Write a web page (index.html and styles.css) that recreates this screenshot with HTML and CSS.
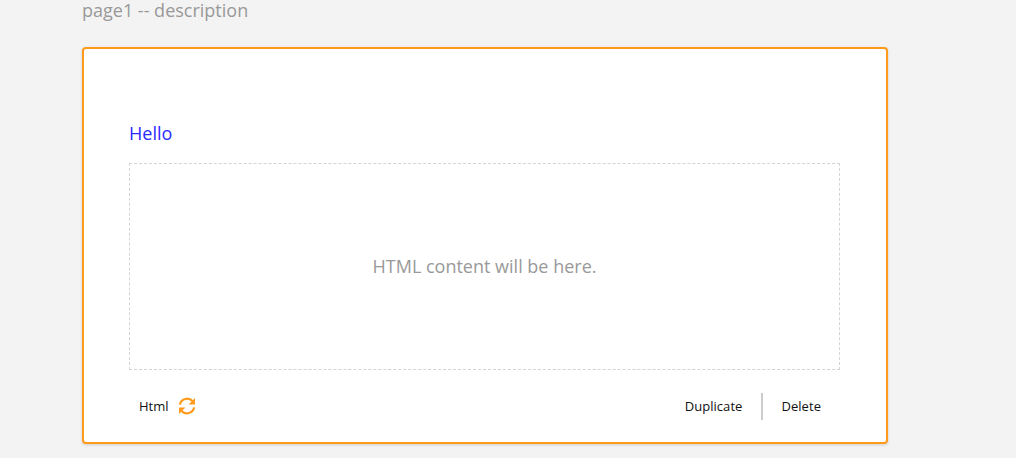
FILE: index.html
```html
<!DOCTYPE html>
<html lang="en">
<head>
<meta charset="utf-8">
<title>page1</title>
<link rel="stylesheet" href="styles.css">
</head>
<body>
<main class="page">
  <p class="description">page1 -- description</p>
  <section class="card">
    <h2 class="title">Hello</h2>
    <div class="placeholder"><span class="placeholder-text">HTML content will be here.</span></div>
    <footer class="toolbar">
      <div class="type">
        <span class="label">Html</span>
        <svg class="refresh" width="18" height="18" viewBox="0 0 18 18" aria-hidden="true">
          <path d="M1.9 7.6A7.3 7.3 0 0 1 14.4 4" fill="none" stroke="#ff9a1a" stroke-width="2.2"/>
          <path d="M17 1V7.4H10.6Z" fill="#ff9a1a"/>
          <path d="M16.1 10.4A7.3 7.3 0 0 1 3.6 14" fill="none" stroke="#ff9a1a" stroke-width="2.2"/>
          <path d="M1 17V10.6H7.4Z" fill="#ff9a1a"/>
        </svg>
      </div>
      <div class="actions">
        <span class="action">Duplicate</span>
        <span class="divider"></span>
        <span class="action">Delete</span>
      </div>
    </footer>
  </section>
</main>
</body>
</html>
```
FILE: styles.css
```css
* { box-sizing: border-box; }
html, body { margin: 0; height: 100%; }
body {
  background: #f3f3f3;
  font-family: "Open Sans", "Noto Sans", sans-serif;
  overflow: hidden;
}
.page { padding: 0 0 0 82px; width: 888px; }
.description {
  margin: 0;
  height: 47px;
  font-size: 18px;
  line-height: 21px;
  color: #999;
}
.card {
  width: 806px;
  height: 397px;
  background: #fff;
  border: 2px solid #ff9a1a;
  border-radius: 4px;
  box-shadow: 0 1px 3px rgba(0, 0, 0, .15);
  padding: 72px 46px 0 45px;
}
.title {
  margin: 0 0 17px;
  font-size: 18px;
  font-weight: 400;
  line-height: 25px;
  color: #2a2aff;
}
.placeholder {
  height: 207px;
  border: 1px dashed #d4d4d4;
  display: flex;
  align-items: center;
  justify-content: center;
  padding-bottom: 2px;
  font-size: 18px;
  color: #999;
}
.toolbar {
  display: flex;
  justify-content: space-between;
  align-items: center;
  height: 28px;
  margin-top: 22px;
  font-size: 13px;
  font-weight: 500;
  color: #111;
}
.type { display: flex; align-items: center; gap: 9px; padding-left: 10px; }
.refresh { display: block; margin-top: -1px; }
.actions { display: flex; align-items: center; padding-right: 19px; }
.action { letter-spacing: 0.05px; }
.divider { width: 2px; height: 27px; background: #ccc; margin: 1px 18px 0 19px; }
```
